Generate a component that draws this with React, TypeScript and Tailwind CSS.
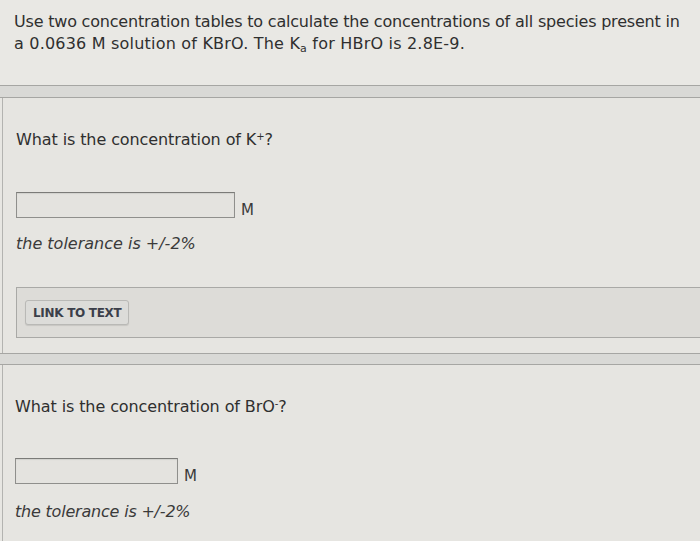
const FONT = "font-['DejaVu_Sans',Verdana,sans-serif]";

function Answer({ width, unit }: { width: string; unit: string }) {
  return (
    <div className="flex items-end gap-[6px]">
      <div
        className={`h-[26px] ${width} border border-[#8f8f8c] border-t-[#7b7b78] bg-[#e4e3df] shadow-[inset_0_1px_1px_rgba(0,0,0,0.08)]`}
      />
      <span className="text-[15px] leading-none text-[#3a3a3a]">{unit}</span>
    </div>
  );
}

export default function App() {
  return (
    <div className={`${FONT} h-[541px] w-[700px] overflow-hidden bg-[#e7e6e2] text-[#2f2f2f]`}>
      {/* prompt */}
      <div className="h-[85px] px-[14px] pt-[11px] text-[16px] leading-[22px] whitespace-nowrap bg-[#e9e8e4]">
        <div className="tracking-[-0.2px]">
          Use two concentration tables to calculate the concentrations of all species present in
        </div>
        <div className="tracking-[0.2px]">
          a 0.0636 M solution of KBrO. The K
          <sub className="text-[11px] leading-none">a</sub> for HBrO is 2.8E-9.
        </div>
      </div>

      <div className="h-[13px] border-y border-[#a6a6a3] bg-[#d9d9d6]" />

      {/* part 1 */}
      <div className="ml-[2px] flex h-[255px] flex-col border-l border-[#b3b3b0] bg-[#e6e5e1] pl-[13px]">
        <p className="mt-[32px] text-[16px] leading-[20px] tracking-[-0.1px]">
          What is the concentration of K<sup className="text-[10px] leading-none">+</sup>?
        </p>
        <div className="mt-[42px]">
          <Answer width="w-[219px]" unit="M" />
        </div>
        <p className="mt-[16px] text-[16px] italic leading-[20px] text-[#3a3a3a]">
          the tolerance is +/-2%
        </p>
        <div className="mt-[33px] flex h-[51px] items-center border-y border-l border-[#a9a9a6] bg-[#dddcd8] pl-[8px]">
          <button className="h-[25px] rounded-[3px] border border-[#b9b9b6] bg-[#dcdcd9] px-[7px] text-[12px] font-bold tracking-[-0.3px] text-[#3b3f4a] shadow-[0_1px_1px_rgba(0,0,0,0.1)]">
            LINK TO TEXT
          </button>
        </div>
      </div>

      <div className="h-[12px] border-y border-[#a6a6a3] bg-[#d9d9d6]" />

      {/* part 2 */}
      <div className="ml-[2px] flex h-[200px] flex-col border-l border-[#b3b3b0] bg-[#e6e5e1] pl-[12px]">
        <p className="mt-[32px] text-[16px] leading-[20px] tracking-[-0.1px]">
          What is the concentration of BrO<sup className="text-[10px] leading-none">-</sup>?
        </p>
        <div className="mt-[41px]">
          <Answer width="w-[163px]" unit="M" />
        </div>
        <p className="mt-[18px] text-[16px] italic leading-[20px] tracking-[-0.2px] text-[#3a3a3a]">
          the tolerance is +/-2%
        </p>
      </div>
    </div>
  );
}
